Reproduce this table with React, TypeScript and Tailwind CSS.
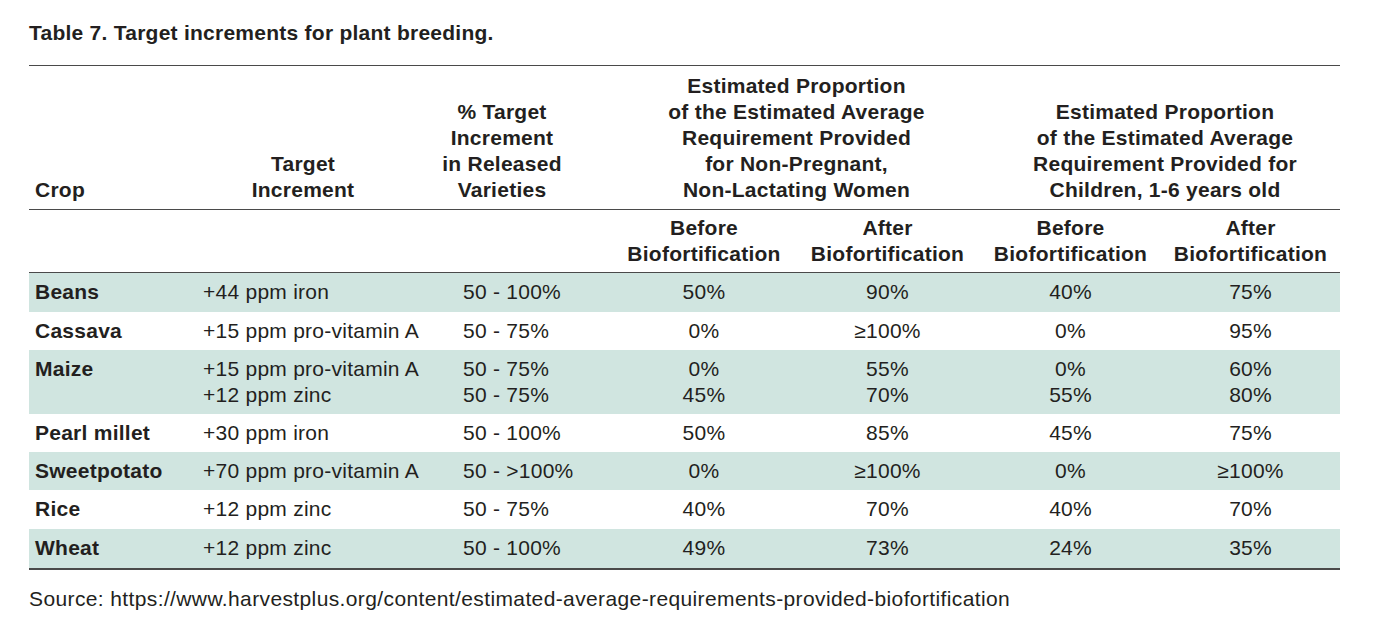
const rows = [
  { crop: "Beans", inc: ["+44 ppm iron"], pct: ["50 - 100%"], wb: ["50%"], wa: ["90%"], cb: ["40%"], ca: ["75%"], shade: true, tall: true },
  { crop: "Cassava", inc: ["+15 ppm pro-vitamin A"], pct: ["50 - 75%"], wb: ["0%"], wa: ["≥100%"], cb: ["0%"], ca: ["95%"], shade: false, tall: false },
  {
    crop: "Maize",
    inc: ["+15 ppm pro-vitamin A", "+12 ppm zinc"],
    pct: ["50 - 75%", "50 - 75%"],
    wb: ["0%", "45%"],
    wa: ["55%", "70%"],
    cb: ["0%", "55%"],
    ca: ["60%", "80%"],
    shade: true,
    tall: false,
  },
  { crop: "Pearl millet", inc: ["+30 ppm iron"], pct: ["50 - 100%"], wb: ["50%"], wa: ["85%"], cb: ["45%"], ca: ["75%"], shade: false, tall: false },
  { crop: "Sweetpotato", inc: ["+70 ppm pro-vitamin A"], pct: ["50 - >100%"], wb: ["0%"], wa: ["≥100%"], cb: ["0%"], ca: ["≥100%"], shade: true, tall: false },
  { crop: "Rice", inc: ["+12 ppm zinc"], pct: ["50 - 75%"], wb: ["40%"], wa: ["70%"], cb: ["40%"], ca: ["70%"], shade: false, tall: true },
  { crop: "Wheat", inc: ["+12 ppm zinc"], pct: ["50 - 100%"], wb: ["49%"], wa: ["73%"], cb: ["24%"], ca: ["35%"], shade: true, tall: true },
];

// 複数行のセル（Maize など）
function Lines({ items }: { items: string[] }) {
  return (
    <>
      {items.map((t, i) => (
        <div key={i}>{t}</div>
      ))}
    </>
  );
}

export default function App() {
  return (
    <div
      className="min-h-[630px] w-[1376px] bg-white pl-[29px] pt-[20px] text-[#231f20] text-[21px] leading-[26px] tracking-[0.25px]"
      style={{ fontFamily: '"Liberation Sans", Arial, sans-serif' }}
    >
      <h1 className="font-bold">Table 7. Target increments for plant breeding.</h1>

      <table className="mt-[19px] w-[1311px] table-fixed border-collapse border-t border-[#4a4a4a]">
        <colgroup>
          <col className="w-[166px]" />
          <col className="w-[225px]" />
          <col className="w-[193px]" />
          <col className="w-[182px]" />
          <col className="w-[185px]" />
          <col className="w-[181px]" />
          <col className="w-[179px]" />
        </colgroup>
        <thead className="font-bold">
          <tr className="border-b border-[#4a4a4a] align-bottom">
            <th className="pl-[6px] pt-[7px] pb-[6px] text-left font-bold">Crop</th>
            <th className="pr-[9px] pt-[7px] pb-[6px] text-center font-bold whitespace-nowrap">
              Target
              <br />
              Increment
            </th>
            <th className="pr-[29px] pt-[7px] pb-[6px] text-center font-bold whitespace-nowrap">
              % Target
              <br />
              Increment
              <br />
              in Released
              <br />
              Varieties
            </th>
            <th colSpan={2} className="pt-[7px] pb-[6px] text-center font-bold whitespace-nowrap">
              Estimated Proportion
              <br />
              of the Estimated Average
              <br />
              Requirement Provided
              <br />
              for Non-Pregnant,
              <br />
              Non-Lactating Women
            </th>
            <th colSpan={2} className="pl-[10px] pt-[7px] pb-[6px] text-center font-bold whitespace-nowrap">
              Estimated Proportion
              <br />
              of the Estimated Average
              <br />
              Requirement Provided for
              <br />
              Children, 1-6 years old
            </th>
          </tr>
          <tr className="border-b border-[#4a4a4a]">
            <th />
            <th />
            <th />
            {["Before", "After", "Before", "After"].map((w, i) => (
              <th key={i} className="pt-[5px] pb-[5px] text-center font-bold whitespace-nowrap">
                {w}
                <br />
                Biofortification
              </th>
            ))}
          </tr>
        </thead>
        <tbody className="border-b-2 border-[#4a4a4a]">
          {rows.map((r) => {
            const pad = r.tall ? "pt-[6px] pb-[7px]" : "py-[6px]";
            return (
              <tr key={r.crop} className={r.shade ? "bg-[#d0e5e0] align-top" : "bg-white align-top"}>
                <td className={`pl-[6px] font-bold ${pad}`}>{r.crop}</td>
                <td className={`pl-[8px] ${pad}`}>
                  <Lines items={r.inc} />
                </td>
                <td className={`pl-[43px] ${pad}`}>
                  <Lines items={r.pct} />
                </td>
                <td className={`text-center ${pad}`}>
                  <Lines items={r.wb} />
                </td>
                <td className={`text-center ${pad}`}>
                  <Lines items={r.wa} />
                </td>
                <td className={`text-center ${pad}`}>
                  <Lines items={r.cb} />
                </td>
                <td className={`text-center ${pad}`}>
                  <Lines items={r.ca} />
                </td>
              </tr>
            );
          })}
        </tbody>
      </table>

      <p className="mt-[16px] tracking-[0.38px]">
        Source: https://www.harvestplus.org/content/estimated-average-requirements-provided-biofortification
      </p>
    </div>
  );
}
